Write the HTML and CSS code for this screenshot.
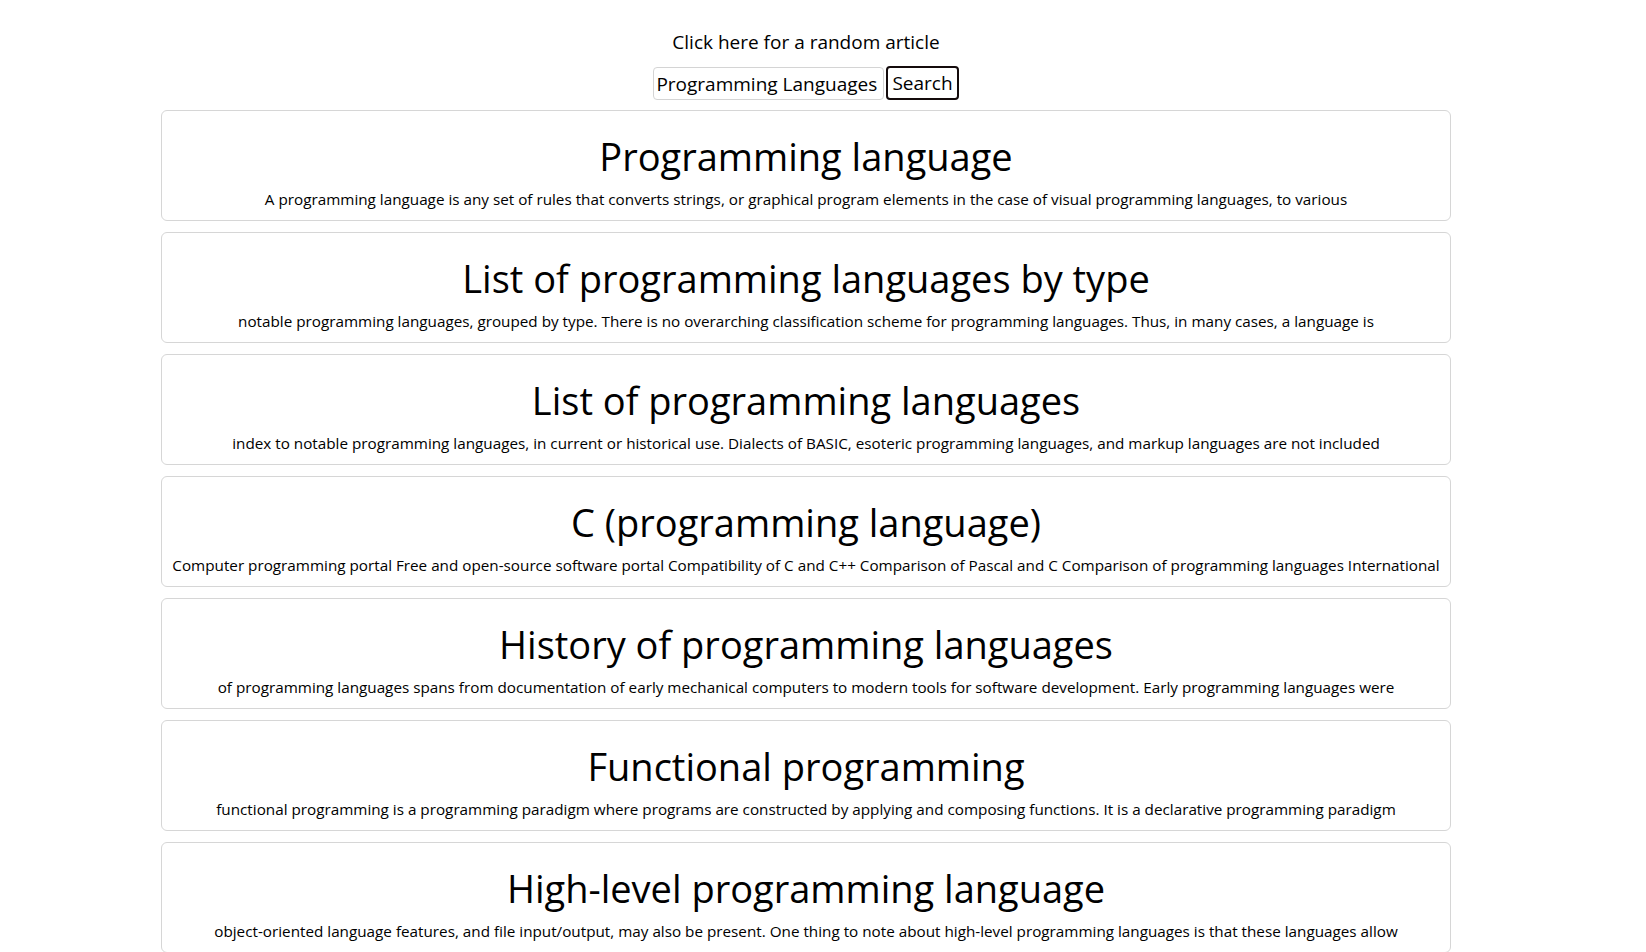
FILE: index.html
```html
<!DOCTYPE html>
<html>
<head>
    <title>Wikipedia Viewer</title>
    <link rel="stylesheet" href="styles.css">
</head>
<body>
    <div class="page">
        <div class="header">
            <a class="random-link" href="#">Click here for a random article</a>
            <form class="search-form" onsubmit="return false;">
                <input class="search-input" type="text" value="Programming Languages">
                <button class="search-button" type="submit">Search</button>
            </form>
        </div>

        <div class="results">
            <a class="result-card" href="#">
                <h1 class="result-title">Programming language</h1>
                <p class="result-snippet">A programming language is any set of rules that converts strings, or graphical program elements in the case of visual programming languages, to various</p>
            </a>
            <a class="result-card" href="#">
                <h1 class="result-title">List of programming languages by type</h1>
                <p class="result-snippet">notable programming languages, grouped by type. There is no overarching classification scheme for programming languages. Thus, in many cases, a language is</p>
            </a>
            <a class="result-card" href="#">
                <h1 class="result-title">List of programming languages</h1>
                <p class="result-snippet">index to notable programming languages, in current or historical use. Dialects of BASIC, esoteric programming languages, and markup languages are not included</p>
            </a>
            <a class="result-card" href="#">
                <h1 class="result-title">C (programming language)</h1>
                <p class="result-snippet">Computer programming portal Free and open-source software portal Compatibility of C and C++ Comparison of Pascal and C Comparison of programming languages International</p>
            </a>
            <a class="result-card" href="#">
                <h1 class="result-title">History of programming languages</h1>
                <p class="result-snippet">of programming languages spans from documentation of early mechanical computers to modern tools for software development. Early programming languages were</p>
            </a>
            <a class="result-card" href="#">
                <h1 class="result-title">Functional programming</h1>
                <p class="result-snippet">functional programming is a programming paradigm where programs are constructed by applying and composing functions. It is a declarative programming paradigm</p>
            </a>
            <a class="result-card" href="#">
                <h1 class="result-title">High-level programming language</h1>
                <p class="result-snippet">object-oriented language features, and file input/output, may also be present. One thing to note about high-level programming languages is that these languages allow</p>
            </a>
            <a class="result-card" href="#">
                <h1 class="result-title">Python (programming language)</h1>
                <p class="result-snippet">Python is a high-level, general-purpose programming language. Its design philosophy emphasizes code readability with the use of significant indentation</p>
            </a>
        </div>
    </div>
</body>
</html>
```

FILE: styles.css
```css
html {
    scrollbar-width: none;
}

html::-webkit-scrollbar {
    display: none;
}

body {
    margin: 0;
    font-family: "Open Sans", "Noto Sans", sans-serif;
    color: #000;
    background-color: #fff;
}

.page {
    width: 1612px;
    text-align: center;
}

.header {
    padding-top: 27px;
}

.random-link {
    display: block;
    font-size: 19px;
    line-height: 30px;
    color: #000;
    text-decoration: none;
}

.search-form {
    display: flex;
    justify-content: center;
    gap: 2px;
    margin-top: 10px;
}

.search-input {
    width: 231px;
    height: 33px;
    box-sizing: border-box;
    padding: 1px 2px;
    font-family: inherit;
    font-size: 19px;
    color: #000;
    border: 1px solid #d4d4d4;
    border-radius: 4px;
}

.search-button {
    height: 34px;
    box-sizing: border-box;
    padding: 0 4px;
    font-family: inherit;
    font-size: 19px;
    color: #000;
    background-color: #fff;
    border: 2px solid #140b0c;
    border-radius: 4px;
    margin-top: -1px;
}

.results {
    display: flex;
    flex-direction: column;
    gap: 11px;
    margin-top: 10px;
}

.result-card {
    display: block;
    width: 80%;
    margin: 0 auto;
    box-sizing: border-box;
    padding: 10px 10px 9px;
    border: 1px solid #d6d6d6;
    border-radius: 6px;
    color: #000;
    text-decoration: none;
}

.result-title {
    margin: 11px 0 7px;
    font-size: 38px;
    font-weight: 400;
    line-height: 48px;
}

.result-snippet {
    margin: 0;
    font-size: 15.25px;
    line-height: 24px;
    white-space: nowrap;
}
```
